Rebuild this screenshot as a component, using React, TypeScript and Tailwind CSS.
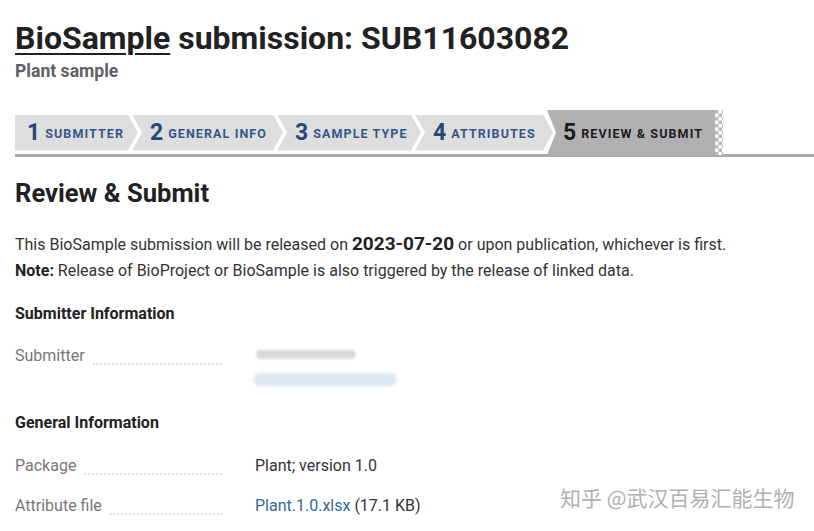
import React from "react";

type Step = { n: string; label: string; w: number; first?: boolean; active?: boolean };

const steps: Step[] = [
  { n: "1", label: "Submitter", w: 123, first: true },
  { n: "2", label: "General Info", w: 151 },
  { n: "3", label: "Sample Type", w: 144 },
  { n: "4", label: "Attributes", w: 138 },
  { n: "5", label: "Review & Submit", w: 168, active: true },
];

function StepItem({ s }: { s: Step }) {
  const clip = s.first
    ? "[clip-path:polygon(0_0,calc(100%-10px)_0,100%_50%,calc(100%-10px)_100%,0_100%)]"
    : s.active
    ? "[clip-path:polygon(0_0,100%_0,100%_100%,0_100%,9px_50%)]"
    : "[clip-path:polygon(0_0,calc(100%-10px)_0,100%_50%,calc(100%-10px)_100%,0_100%,10px_50%)]";
  return (
    <div
      className={
        "flex items-center shrink-0 " +
        (s.first ? "" : "-ml-[6px] ") +
        (s.active ? "h-[45px] bg-[#b1b1b4] pl-[16px] " : "h-[36px] bg-[#dedede] ") +
        (s.first ? "pl-[12px] " : s.active ? "" : "pl-[18px] ") +
        clip
      }
      style={{ width: s.w }}
    >
      <span
        className={
          "text-[23px] font-bold leading-none mr-[5px] " +
          (s.active ? "text-[#1c1c1c]" : "text-[#27467a]")
        }
      >
        {s.n}
      </span>
      <span
        className={
          "text-[12.5px] font-bold uppercase tracking-[1.1px] leading-none pt-[3px] " +
          (s.active ? "text-[#1c1c1c]" : "text-[#34578a]")
        }
      >
        {s.label}
      </span>
    </div>
  );
}

function Checker() {
  return (
    <svg width="8" height="45" className="shrink-0 block">
      <defs>
        <pattern id="ck" width="7" height="7" patternUnits="userSpaceOnUse">
          <rect width="7" height="7" fill="#ffffff" />
          <rect x="0" y="0" width="3.5" height="3.5" fill="#b9b9bc" />
          <rect x="3.5" y="3.5" width="3.5" height="3.5" fill="#b9b9bc" />
        </pattern>
      </defs>
      <rect width="8" height="45" fill="url(#ck)" />
    </svg>
  );
}

function Row({ label, children, mt }: { label: string; children: React.ReactNode; mt: string }) {
  return (
    <div className={"flex items-start " + mt}>
      <div className="flex items-start w-[207px] shrink-0">
        <span className="text-[16px] leading-[20px] text-[#777] whitespace-nowrap">{label}</span>
        <span className="flex-1 ml-[8px] h-[19px] border-b-2 border-dotted border-[#e0e0e0]" />
      </div>
      <div className="ml-[33px] text-[16px] leading-[20px] text-[#333]">{children}</div>
    </div>
  );
}

export default function App() {
  return (
    <div className="relative w-[814px] h-[531px] overflow-hidden bg-white font-['Roboto',sans-serif] text-[#333]">
      <div className="pt-[18px]">
        <h1 className="pl-[15px] text-[32px] leading-[40px] font-bold text-[#212121]">
          <span className="underline decoration-[2px] underline-offset-[4px]">BioSample</span> submission: SUB11603082
        </h1>
        <div className="pl-[15px] mt-[2px] text-[17.6px] leading-[22px] font-bold text-[#5f5f66]">Plant sample</div>

        <div className="mt-[28px] pl-[15px] flex items-center h-[45px]">
          {steps.map((s) => (
            <StepItem key={s.n} s={s} />
          ))}
          <Checker />
        </div>
        <div className="ml-[15px] -mt-[1px] h-[3px] bg-[#ababab]" />

        <div className="px-[15px]">
          <h2 className="mt-[19px] text-[25.6px] leading-[34px] font-bold text-[#212121]">Review &amp; Submit</h2>
          <div className="mt-[22px] text-[16px] leading-[26px] text-[#333]">
            <p>
              This BioSample submission will be released on{" "}
              <span className="text-[19px] leading-none font-bold text-[#222]">2023-07-20</span> or upon publication,
              whichever is first.
            </p>
            <p>
              <span className="font-bold text-[#222]">Note:</span> Release of BioProject or BioSample is also triggered by
              the release of linked data.
            </p>
          </div>

          <h3 className="mt-[20px] text-[16px] leading-[20px] font-bold text-[#222]">Submitter Information</h3>

          <div className="flex items-start mt-[22px]">
            <div className="flex items-start w-[207px] shrink-0">
              <span className="text-[16px] leading-[20px] text-[#777] whitespace-nowrap">Submitter</span>
              <span className="flex-1 ml-[8px] h-[19px] border-b-2 border-dotted border-[#e0e0e0]" />
            </div>
            <div className="ml-[33px] flex flex-col">
              <div className="relative h-[20px] w-[110px]">
                <div className="absolute left-[1px] top-[4px] h-[9px] w-[100px] rounded-full bg-[#d9d9d9] blur-[1px]" />
              </div>
              <div className="relative h-[22px] w-[150px] mt-[2px]">
                <div className="absolute left-[-2px] top-[5px] h-[13px] w-[144px] rounded-full bg-[#dfe8f0] blur-[1.5px]" />
              </div>
            </div>
          </div>

          <h3 className="mt-[23px] text-[16px] leading-[20px] font-bold text-[#222]">General Information</h3>

          <Row label="Package" mt="mt-[23px]">
            Plant; version 1.0
          </Row>
          <Row label="Attribute file" mt="mt-[20px]">
            <span className="text-[#2f6a9a]">Plant.1.0.xlsx</span> (17.1 KB)
          </Row>
        </div>
      </div>

      <div className="absolute left-[560px] top-[482px] text-[21px] leading-[30px] text-[#b0b0b0] font-['Noto_Sans_CJK_SC',sans-serif] whitespace-nowrap [text-shadow:0_0_2px_#fff]">
        知乎 @武汉百易汇能生物
      </div>
    </div>
  );
}
